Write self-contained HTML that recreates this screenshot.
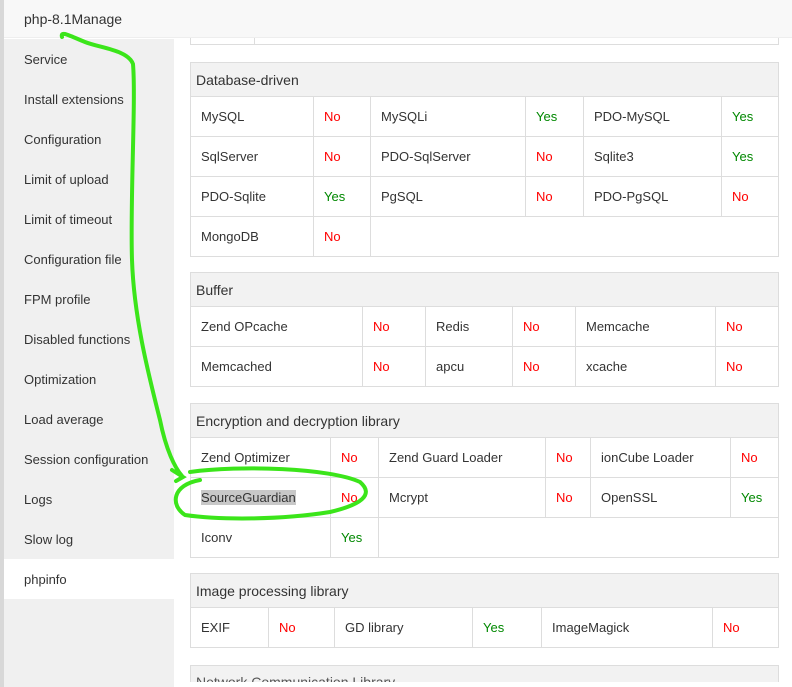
<!DOCTYPE html><html><head><meta charset="utf-8"><style>
*{margin:0;padding:0;box-sizing:border-box}
body{width:792px;height:687px;overflow:hidden;background:#fff;font-family:"Liberation Sans","Noto Sans CJK SC",sans-serif;font-size:13px;color:#333;position:relative}
.strip{position:absolute;left:0;top:0;width:4px;height:687px;background:#d8d8d8}
.title{position:absolute;left:4px;top:0;width:788px;height:38px;background:#f8f8f8;border-bottom:1px solid #eee;font-size:14px;line-height:38px;padding-left:20px;color:#333}
.side{position:absolute;left:4px;top:39px;width:170px;height:648px;background:#f0f0f0}
.side div{height:40px;line-height:42px;padding-left:20px;color:#333}
.side .act{background:#fff}
table{position:absolute;left:190px;width:589px;border-collapse:collapse;table-layout:fixed}
td,th{border:1px solid #ddd;height:40px;padding-left:10px;text-align:left;font-weight:normal}
th{height:34px;background:#f2f2f2;font-size:14px;padding-left:5px}
.n{color:#f00}.y{color:#080}
svg{position:absolute;left:0;top:0}
</style></head><body>
<div class="strip"></div>
<div class="title">php-8.1Manage</div>
<div class="side">
<div>Service</div><div>Install extensions</div><div>Configuration</div><div>Limit of upload</div><div>Limit of timeout</div><div>Configuration file</div><div>FPM profile</div><div>Disabled functions</div><div>Optimization</div><div>Load average</div><div>Session configuration</div><div>Logs</div><div>Slow log</div><div class="act">phpinfo</div>
</div>
<div style="position:absolute;left:190px;top:38px;width:589px;height:7px;border:1px solid #ddd;border-top:none"><div style="position:absolute;left:63px;top:0;height:7px;border-left:1px solid #ddd"></div></div>
<table style="top:62px"><colgroup><col style="width:123px"><col style="width:57px"><col style="width:155px"><col style="width:58px"><col style="width:138px"><col></colgroup>
<tr><th colspan="6">Database-driven</th></tr>
<tr><td>MySQL</td><td class="n">No</td><td>MySQLi</td><td class="y">Yes</td><td>PDO-MySQL</td><td class="y">Yes</td></tr>
<tr><td>SqlServer</td><td class="n">No</td><td>PDO-SqlServer</td><td class="n">No</td><td>Sqlite3</td><td class="y">Yes</td></tr>
<tr><td>PDO-Sqlite</td><td class="y">Yes</td><td>PgSQL</td><td class="n">No</td><td>PDO-PgSQL</td><td class="n">No</td></tr>
<tr><td>MongoDB</td><td class="n">No</td><td colspan="4"></td></tr></table>
<table style="top:272px"><colgroup><col style="width:172px"><col style="width:63px"><col style="width:87px"><col style="width:63px"><col style="width:140px"><col></colgroup>
<tr><th colspan="6">Buffer</th></tr>
<tr><td>Zend OPcache</td><td class="n">No</td><td>Redis</td><td class="n">No</td><td>Memcache</td><td class="n">No</td></tr>
<tr><td>Memcached</td><td class="n">No</td><td>apcu</td><td class="n">No</td><td>xcache</td><td class="n">No</td></tr></table>
<table style="top:403px"><colgroup><col style="width:140px"><col style="width:48px"><col style="width:167px"><col style="width:45px"><col style="width:140px"><col></colgroup>
<tr><th colspan="6">Encryption and decryption library</th></tr>
<tr><td>Zend Optimizer</td><td class="n">No</td><td>Zend Guard Loader</td><td class="n">No</td><td>ionCube Loader</td><td class="n">No</td></tr>
<tr><td><span style="background:#c8c8c8">SourceGuardian</span></td><td class="n">No</td><td>Mcrypt</td><td class="n">No</td><td>OpenSSL</td><td class="y">Yes</td></tr>
<tr><td>Iconv</td><td class="y">Yes</td><td colspan="4"></td></tr></table>
<table style="top:573px"><colgroup><col style="width:78px"><col style="width:66px"><col style="width:138px"><col style="width:69px"><col style="width:171px"><col></colgroup>
<tr><th colspan="6">Image processing library</th></tr>
<tr><td>EXIF</td><td class="n">No</td><td>GD library</td><td class="y">Yes</td><td>ImageMagick</td><td class="n">No</td></tr></table>
<div style="position:absolute;left:190px;top:665px;width:589px;height:13px;overflow:hidden;background:#f2f2f2;border:1px solid #ddd;border-bottom:none;font-size:14px;padding:8px 5px;color:#555;line-height:16px">Network Communication Library</div>
<svg width="792" height="687"><path d="M62 37 C60 30 70 36 85 42 C100 48 128 50 133 64 C136 100 130 200 132 260 C134 320 150 380 160 420 C166 450 175 468 182 476 M172 470 L183 477 L176 481" fill="none" stroke="#3be51a" stroke-width="4" stroke-linecap="round"/>
<path d="M190 472 C240 465 330 468 360 482 C375 495 360 505 330 512 C280 520 220 520 185 515 C170 505 172 485 200 480" fill="none" stroke="#3be51a" stroke-width="4" stroke-linecap="round"/></svg>
</body></html>
